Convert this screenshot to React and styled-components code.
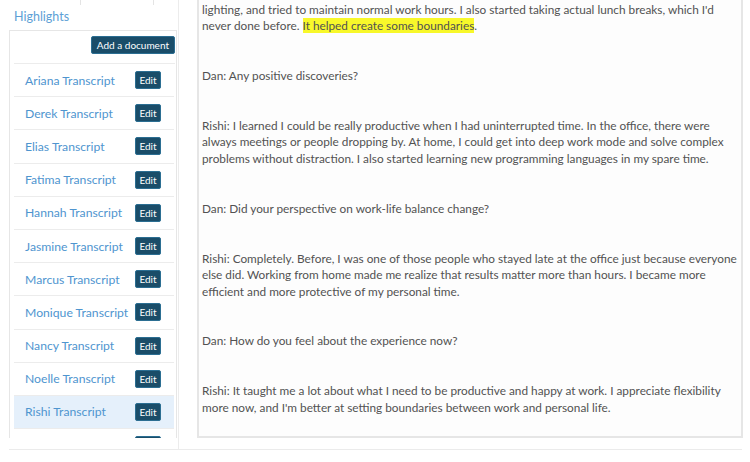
import React from 'react'
import styled, { createGlobalStyle } from 'styled-components'

const GlobalStyle = createGlobalStyle`
  html, body {
    margin: 0;
    padding: 0;
    background: #fff;
  }
  body {
    font-family: Lato, "Open Sans", "Liberation Sans", sans-serif;
  }
`

const Frame = styled.div`
  width: 750px;
  height: 462px;
  overflow: hidden;
  padding-left: 9px;
  box-sizing: border-box;
`

const Body = styled.div`
  display: flex;
  width: 733px;
  height: 450px;
  border-bottom: 1px solid #ebebeb;
  box-sizing: border-box;
`

const Sidebar = styled.aside`
  width: 170px;
  flex-shrink: 0;
  display: flex;
  flex-direction: column;
  border-right: 1px solid #ececec;
  box-sizing: border-box;
  padding-bottom: 11px;
`

const TabStrip = styled.div`
  display: flex;
  height: 5px;
`

const Tab = styled.div`
  width: ${p => p.w}px;
  border-right: 1px solid #e4e4e4;
`

const Heading = styled.div`
  height: 25px;
  line-height: 24px;
  padding-left: 5px;
  font-size: 12.5px;
  color: #5d9fd6;
`

const ListBox = styled.div`
  flex: 1;
  margin-right: 1px;
  border: 1px solid #e6e6e6;
  border-bottom: none;
  overflow: hidden;
  padding: 0 2px 0 4px;
`

const ListHeader = styled.div`
  display: flex;
  justify-content: flex-end;
  padding: 5px 0 9px;
  margin-right: -1px;
  border-bottom: 1px solid #ececec;
`

const DarkButton = styled.button`
  background: #1a4d69;
  color: #fff;
  border: 1px solid #2b6e92;
  border-radius: 2px;
  font-family: inherit;
  font-size: 10px;
  height: 18px;
  width: ${p => (p.small ? '26px' : 'auto')};
  padding: 0 ${p => (p.small ? '0' : '5px')};
  line-height: 16px;
  white-space: nowrap;
  cursor: pointer;
`

const Row = styled.div`
  display: flex;
  align-items: center;
  justify-content: space-between;
  height: 33.2px;
  box-sizing: border-box;
  border-bottom: 1px solid #ececec;
  padding: 0 13px 0 11px;
  background: ${p => (p.active ? '#e5f0fb' : 'transparent')};
`

const Name = styled.a`
  font-size: 12.2px;
  color: #4f95cf;
  text-decoration: none;
  white-space: nowrap;
`

const Editor = styled.div`
  margin-left: 18px;
  width: 546px;
  height: 438px;
  flex-shrink: 0;
  border: 2px solid #e6e6e6;
  border-top: none;
  background: #fdfdfd;
  box-sizing: border-box;
  overflow: hidden;
  padding: 0 3px;
`

const Transcript = styled.div`
  margin-top: -15px;
  font-size: 11.8px;
  line-height: 16.6px;
  color: #525252;
`

const Para = styled.p`
  margin: 0 0 33.2px;
  white-space: nowrap;
`

const Mark = styled.span`
  background: #f8f82a;
`

const names = [
  'Ariana', 'Derek', 'Elias', 'Fatima', 'Hannah', 'Jasmine',
  'Marcus', 'Monique', 'Nancy', 'Noelle', 'Rishi', 'Sofia'
]

const paras = [
  [
    <>Rishi: At first it was hard. <Mark>I set up a dedicated workspace with good natural</Mark> light and kept a routine with proper</>,
    'lighting, and tried to maintain normal work hours. I also started taking actual lunch breaks, which I\'d',
    <>never done before. <Mark>It helped create some boundaries</Mark>.</>
  ],
  ['Dan: Any positive discoveries?'],
  [
    'Rishi: I learned I could be really productive when I had uninterrupted time. In the office, there were',
    'always meetings or people dropping by. At home, I could get into deep work mode and solve complex',
    'problems without distraction. I also started learning new programming languages in my spare time.'
  ],
  ['Dan: Did your perspective on work-life balance change?'],
  [
    'Rishi: Completely. Before, I was one of those people who stayed late at the office just because everyone',
    'else did. Working from home made me realize that results matter more than hours. I became more',
    'efficient and more protective of my personal time.'
  ],
  ['Dan: How do you feel about the experience now?'],
  [
    'Rishi: It taught me a lot about what I need to be productive and happy at work. I appreciate flexibility',
    'more now, and I\'m better at setting boundaries between work and personal life.'
  ]
]

export default function App() {
  return (
    <>
      <GlobalStyle />
      <Frame>
        <Body>
          <Sidebar>
            <TabStrip>
              <Tab w={71} />
              <Tab w={72} />
            </TabStrip>
            <Heading>Highlights</Heading>
            <ListBox>
              <ListHeader>
                <DarkButton>Add a document</DarkButton>
              </ListHeader>
              {names.map(n => (
                <Row key={n} active={n === 'Rishi'}>
                  <Name href="#">{n} Transcript</Name>
                  <DarkButton small>Edit</DarkButton>
                </Row>
              ))}
            </ListBox>
          </Sidebar>
          <Editor>
            <Transcript>
              {paras.map((lines, i) => (
                <Para key={i}>
                  {lines.map((l, j) => (
                    <React.Fragment key={j}>
                      {j > 0 && <br />}
                      {l}
                    </React.Fragment>
                  ))}
                </Para>
              ))}
            </Transcript>
          </Editor>
        </Body>
      </Frame>
    </>
  )
}
